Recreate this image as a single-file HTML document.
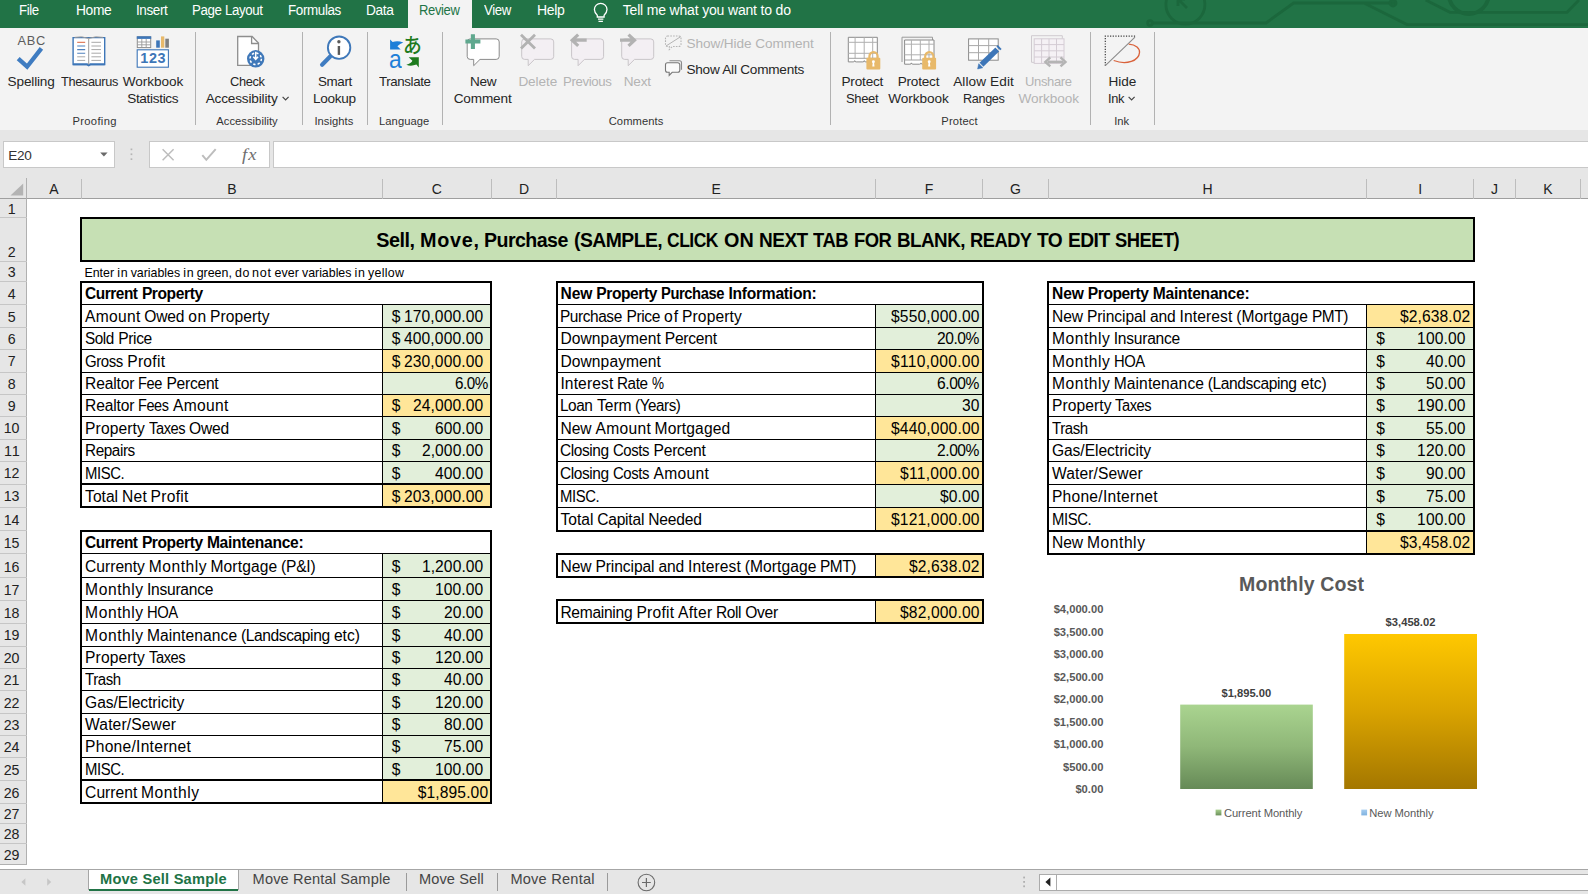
<!DOCTYPE html>
<html lang="en"><head><meta charset="utf-8"><title>Sell, Move, Purchase - Excel</title>
<style>
html,body{margin:0;padding:0;}
body{width:1588px;height:894px;overflow:hidden;position:relative;background:#fff;font-family:"Liberation Sans","Noto Sans CJK JP",sans-serif;color:#000;}
#bg div,#fg div{position:absolute;}
#tx span{position:absolute;white-space:pre;transform-origin:0 0;}
svg{position:absolute;overflow:visible;}
</style></head><body>
<div id="bg">
<div style="left:0.00px;top:0.00px;width:1588.00px;height:28.00px;background:#217346;"></div>
<div style="left:407.60px;top:0.00px;width:64.20px;height:28.50px;background:#f3f3f3;"></div>
<div style="left:0.00px;top:28.00px;width:1588.00px;height:101.50px;background:#f3f3f3;"></div>
<div style="left:0.00px;top:129.50px;width:1588.00px;height:69.00px;background:#e6e6e6;"></div>
<div style="left:2.50px;top:140.50px;width:112.50px;height:27.00px;background:#fff;border:1px solid #c8c8c8;box-sizing:border-box;"></div>
<div style="left:148.50px;top:140.50px;width:121.50px;height:27.00px;background:#fff;border:1px solid #c8c8c8;box-sizing:border-box;"></div>
<div style="left:273.00px;top:140.50px;width:1330.00px;height:27.00px;background:#fff;border:1px solid #c8c8c8;box-sizing:border-box;"></div>
<div style="left:0.00px;top:167.50px;width:1588.00px;height:31.00px;background:#e6e6e6;"></div>
<div style="left:0.00px;top:198.50px;width:26.50px;height:665.50px;background:#e6e6e6;"></div>
<div style="left:81.40px;top:217.70px;width:1392.10px;height:43.30px;background:#c6e0b4;"></div>
<div style="left:382.50px;top:304.60px;width:108.80px;height:22.60px;background:#e2efda;"></div>
<div style="left:382.50px;top:327.20px;width:108.80px;height:22.30px;background:#e2efda;"></div>
<div style="left:382.50px;top:349.50px;width:108.80px;height:22.50px;background:#ffe699;"></div>
<div style="left:382.50px;top:372.00px;width:108.80px;height:22.20px;background:#e2efda;"></div>
<div style="left:382.50px;top:394.20px;width:108.80px;height:22.30px;background:#ffe699;"></div>
<div style="left:382.50px;top:416.50px;width:108.80px;height:22.50px;background:#e2efda;"></div>
<div style="left:382.50px;top:439.00px;width:108.80px;height:22.50px;background:#e2efda;"></div>
<div style="left:382.50px;top:461.50px;width:108.80px;height:22.50px;background:#e2efda;"></div>
<div style="left:382.50px;top:484.00px;width:108.80px;height:23.00px;background:#ffe699;"></div>
<div style="left:382.50px;top:553.60px;width:108.80px;height:23.70px;background:#e2efda;"></div>
<div style="left:382.50px;top:577.30px;width:108.80px;height:23.00px;background:#e2efda;"></div>
<div style="left:382.50px;top:600.30px;width:108.80px;height:22.90px;background:#e2efda;"></div>
<div style="left:382.50px;top:623.20px;width:108.80px;height:22.80px;background:#e2efda;"></div>
<div style="left:382.50px;top:646.00px;width:108.80px;height:22.50px;background:#e2efda;"></div>
<div style="left:382.50px;top:668.50px;width:108.80px;height:22.30px;background:#e2efda;"></div>
<div style="left:382.50px;top:690.80px;width:108.80px;height:22.40px;background:#e2efda;"></div>
<div style="left:382.50px;top:713.20px;width:108.80px;height:22.20px;background:#e2efda;"></div>
<div style="left:382.50px;top:735.40px;width:108.80px;height:22.10px;background:#e2efda;"></div>
<div style="left:382.50px;top:757.50px;width:108.80px;height:22.70px;background:#e2efda;"></div>
<div style="left:382.50px;top:780.20px;width:108.80px;height:23.10px;background:#ffe699;"></div>
<div style="left:875.60px;top:304.60px;width:107.00px;height:22.60px;background:#e2efda;"></div>
<div style="left:875.60px;top:327.20px;width:107.00px;height:22.30px;background:#e2efda;"></div>
<div style="left:875.60px;top:349.50px;width:107.00px;height:22.50px;background:#ffe699;"></div>
<div style="left:875.60px;top:372.00px;width:107.00px;height:22.20px;background:#e2efda;"></div>
<div style="left:875.60px;top:394.20px;width:107.00px;height:22.30px;background:#e2efda;"></div>
<div style="left:875.60px;top:416.50px;width:107.00px;height:22.50px;background:#ffe699;"></div>
<div style="left:875.60px;top:439.00px;width:107.00px;height:22.50px;background:#e2efda;"></div>
<div style="left:875.60px;top:461.50px;width:107.00px;height:22.50px;background:#ffe699;"></div>
<div style="left:875.60px;top:484.00px;width:107.00px;height:23.00px;background:#e2efda;"></div>
<div style="left:875.60px;top:507.00px;width:107.00px;height:23.50px;background:#ffe699;"></div>
<div style="left:875.60px;top:553.60px;width:107.00px;height:23.70px;background:#ffe699;"></div>
<div style="left:875.60px;top:600.30px;width:107.00px;height:22.90px;background:#ffe699;"></div>
<div style="left:1366.90px;top:304.60px;width:106.60px;height:22.60px;background:#ffe699;"></div>
<div style="left:1366.90px;top:327.20px;width:106.60px;height:22.30px;background:#e2efda;"></div>
<div style="left:1366.90px;top:349.50px;width:106.60px;height:22.50px;background:#e2efda;"></div>
<div style="left:1366.90px;top:372.00px;width:106.60px;height:22.20px;background:#e2efda;"></div>
<div style="left:1366.90px;top:394.20px;width:106.60px;height:22.30px;background:#e2efda;"></div>
<div style="left:1366.90px;top:416.50px;width:106.60px;height:22.50px;background:#e2efda;"></div>
<div style="left:1366.90px;top:439.00px;width:106.60px;height:22.50px;background:#e2efda;"></div>
<div style="left:1366.90px;top:461.50px;width:106.60px;height:22.50px;background:#e2efda;"></div>
<div style="left:1366.90px;top:484.00px;width:106.60px;height:23.00px;background:#e2efda;"></div>
<div style="left:1366.90px;top:507.00px;width:106.60px;height:23.50px;background:#e2efda;"></div>
<div style="left:1366.90px;top:530.50px;width:106.60px;height:23.10px;background:#ffe699;"></div>
<div style="left:0.00px;top:869.00px;width:1588.00px;height:25.00px;background:#e6e6e6;"></div>
<div style="left:88.70px;top:869.50px;width:149.30px;height:20.00px;background:#fff;"></div>
<div style="left:1039.00px;top:873.50px;width:560.00px;height:17.50px;background:#fff;border:1px solid #ababab;box-sizing:border-box;"></div>
</div>
<svg width="1588" height="894" style="left:0;top:0" viewBox="0 0 1588 894" fill="none">
<!-- title bar circuit decoration -->
<g stroke="#1b673c" stroke-width="2.800" fill="none">
<circle cx="1185.400" cy="4.600" r="19.500"/><path d="M1178 -1 l9 9 M1178 -1 v7 M1178 -1 h7"/>
<path d="M1152 23 h114 l27.600 -20 h101.400 M1364 3 l43 21.600 h181"/>
<circle cx="1150" cy="23" r="2.300"/><circle cx="1393" cy="3" r="3"/>
<path d="M1425.700 0 l24.300 12.300 h117 l12 -12.300"/><circle cx="1468.800" cy="-6" r="20" stroke-width="4"/>
</g>
<!-- lightbulb -->
<g stroke="#fff" stroke-width="1.3" fill="none">
<path d="M597.3 15.2 c-2.4 -2.2 -2.9 -4 -2.9 -5.6 a6.3 6.3 0 0 1 12.6 0 c0 1.600 -0.500 3.400 -2.900 5.600 v1.800 h-6.800 z"/>
<path d="M598 19.200 h5.400 M598.500 21.300 h4.400"/>
</g>
<!-- Spelling -->
<path d="M18.200 58.600 L27.100 66.700 L41.400 48.400" stroke="#3f7cc1" stroke-width="4.300" stroke-linecap="butt" stroke-linejoin="miter"/>
<!-- Thesaurus (book) -->
<path d="M73.100 37.600 h31.600 v27 h-31.600 z" fill="#fff" stroke="#3d76b8" stroke-width="1.400"/>
<path d="M73.100 64.300 h14 l1.600 1 l1.600 -1 h14.400" stroke="#3d76b8" stroke-width="2"/>
<path d="M74.600 37.400 q7 -1.600 14.100 1 q7 -2.600 14.400 -1" stroke="#9a9a9a" stroke-width="1"/>
<path d="M88.700 38.600 v26" stroke="#9a9a9a" stroke-width="1"/>
<path d="M77.200 42.300 h8" stroke="#d9623b" stroke-width="1"/>
<path d="M77.200 46 h8 M77.200 49.600 h8 M77.200 53.200 h8" stroke="#4f81bd" stroke-width="1.100"/>
<path d="M77.200 56.800 h8 M77.200 60.400 h8 M91.400 42.300 h9.600 M91.400 46 h9.600 M91.400 49.600 h9.600 M91.400 53.200 h9.600 M91.400 56.800 h9.600 M91.400 60.400 h9.600" stroke="#a8a8a8" stroke-width="1"/>
<!-- Workbook statistics -->
<rect x="137.300" y="36.800" width="13.400" height="10.800" fill="#fff" stroke="#8c8c8c" stroke-width="1"/>
<rect x="136.800" y="36.300" width="14.400" height="2.600" fill="#3d76b8"/>
<path d="M137.300 42 h13.400 M137.300 44.800 h13.400 M141.800 39 v8.600 M146.200 39 v8.600" stroke="#9a9a9a" stroke-width="0.900"/>
<rect x="156.200" y="40.400" width="3.600" height="7.300" fill="#3d76b8"/><rect x="161" y="36.400" width="3.300" height="11.300" fill="#e8b96a"/><rect x="165.300" y="38.700" width="3.600" height="9" fill="#7f7f7f"/>
<rect x="137.200" y="49.800" width="31.200" height="17.400" fill="#fff" stroke="#3d76b8" stroke-width="1.100"/>
<!-- Check accessibility -->
<path d="M237.700 36.500 h14.400 l6.400 6.600 v22.200 h-20.800 z" fill="#fff" stroke="#8e8e8e" stroke-width="1.300"/>
<path d="M251.600 36.500 v7 h6.900" stroke="#8e8e8e" stroke-width="1.300"/>
<circle cx="255.700" cy="58.800" r="8.700" fill="#3f78b9"/>
<circle cx="255.700" cy="58.800" r="5.700" stroke="#fff" stroke-width="1.500" stroke-dasharray="2.300 2.150" fill="none"/>
<path d="M255.700 51.800 v7 M253.300 56.800 l2.400 2.600 l2.400 -2.600" stroke="#fff" stroke-width="1.500"/>
<!-- Smart lookup -->
<circle cx="339.100" cy="47.700" r="11.200" fill="#fff" stroke="#3f78b9" stroke-width="1.900"/>
<path d="M330.200 56.600 L322.100 64.700" stroke="#3f7cc1" stroke-width="4.200" stroke-linecap="round"/>
<path d="M338.900 46 v8.900" stroke="#5a5a5a" stroke-width="2.400"/><circle cx="338.900" cy="41.700" r="1.700" fill="#5a5a5a"/>
<!-- Translate arrows -->
<path d="M390.100 39.600 L390.100 49.500 L400.700 49.500 L397.400 46.200 Q400 43.600 403.300 42.500 Q397.500 40.300 392.600 42.100 Z" fill="#1e7fd8"/>
<path d="M408.700 57.300 L418.800 57.300 L418.800 67.600 L416.400 64.600 Q411 66.800 406.300 64.800 Q411.300 63.400 412.400 60.700 Z" fill="#1d7a1d"/>
<!-- New comment -->
<path d="M470.200 38.900 h26 a3 3 0 0 1 3 3 v14.500 a3 3 0 0 1 -3 3 h-16.200 l-6.300 6.300 v-6.300 h-3.500 a3 3 0 0 1 -3 -3 v-14.500 a3 3 0 0 1 3 -3 z" fill="#fff" stroke="#8a8a8a" stroke-width="1"/>
<path d="M465.400 41.500 h15 M472.900 34.200 v14.700" stroke="#5fa88e" stroke-width="4.100"/>
<!-- Delete -->
<g stroke="#c9c5c9" stroke-width="1" fill="#f3eff3">
<path d="M524.700 38.900 h26 a3 3 0 0 1 3 3 v14.500 a3 3 0 0 1 -3 3 h-16.200 l-6.300 6.300 v-6.300 h-3.500 a3 3 0 0 1 -3 -3 v-14.500 a3 3 0 0 1 3 -3 z"/>
<path d="M574.600 38.900 h26 a3 3 0 0 1 3 3 v14.500 a3 3 0 0 1 -3 3 h-16.200 l-6.300 6.300 v-6.300 h-3.500 a3 3 0 0 1 -3 -3 v-14.500 a3 3 0 0 1 3 -3 z"/>
<path d="M624.700 38.900 h26 a3 3 0 0 1 3 3 v14.500 a3 3 0 0 1 -3 3 h-16.200 l-6.300 6.300 v-6.300 h-3.500 a3 3 0 0 1 -3 -3 v-14.500 a3 3 0 0 1 3 -3 z"/>
</g>
<path d="M521 34.700 l14 13.800 M535 34.700 l-14 13.800" stroke="#b2b2b2" stroke-width="2.800"/>
<path d="M586.700 40.200 h-14 M578.200 34.600 l-6 5.600 l6 5.600" stroke="#b2b2b2" stroke-width="3.200" stroke-linejoin="miter"/>
<path d="M620 40.200 h14 M628.500 34.600 l6 5.600 l-6 5.600" stroke="#b2b2b2" stroke-width="3.200" stroke-linejoin="miter"/>
<!-- show/hide comment small -->
<path d="M667.500 36 h11.500 a2 2 0 0 1 2 2 v6.500 a2 2 0 0 1 -2 2 h-6.700 l-3 3 v-3 h-1.800 a2 2 0 0 1 -2 -2 v-6.500 a2 2 0 0 1 2 -2 z" stroke="#b4b4b4" stroke-width="1.100" stroke-dasharray="1.600 1.200"/>
<path d="M666 46 l14.800 -9.400" stroke="#b4b4b4" stroke-width="1"/>
<!-- show all comments small -->
<path d="M669.500 60.800 h10 a2 2 0 0 1 2 2 v7" stroke="#8a8a8a" stroke-width="1.100"/>
<path d="M667.500 62.700 h10.300 a2 2 0 0 1 2 2 v5.600 a2 2 0 0 1 -2 2 h-5.600 l-3 3 v-3 h-1.700 a2 2 0 0 1 -2 -2 v-5.600 a2 2 0 0 1 2 -2 z" stroke="#777" stroke-width="1.100" fill="#fafafa"/>
<!-- Protect sheet -->
<g stroke="#8a8a8a" stroke-width="1">
<path d="M848.300 37.300 h29 v24.600 h-11.500 q-1.500 0 -1.500 -1.300 q0 1.300 -1.500 1.300 h-6.600 q-1.500 0 -1.500 -1.300 q0 1.300 -1.500 1.300 h-4.900 z" fill="#fff"/>
<path d="M855.100 37.300 v21 M864.200 37.300 v21 M872.700 37.300 v21" stroke="#b0b0b0"/>
<path d="M848.300 42.300 h29 M848.300 53.300 h29" stroke="#b0b0b0"/><path d="M848.300 58.300 h29" stroke="#a0a0a0"/>
</g>
<g><rect x="866.400" y="57.700" width="13.900" height="11.700" rx="1" fill="#e8b96a"/>
<path d="M869.400 58 v-1.700 a4.100 4.100 0 0 1 8.200 0 v1.700" stroke="#e8b96a" stroke-width="2.200"/>
<circle cx="873.400" cy="61.800" r="1.450" fill="#fff"/><path d="M872.800 62 h1.200 l0.500 4.400 h-2.200 z" fill="#fff"/></g>
<!-- Protect workbook -->
<g stroke="#8a8a8a" stroke-width="1">
<path d="M902 62 v-24.800 h30.500 v3" fill="none" stroke="#9a9a9a"/>
<path d="M904.600 40 h29.400 v24.200 h-11.500 q-1.500 0 -1.500 -1.300 q0 1.300 -1.500 1.300 h-6.600 q-1.500 0 -1.500 -1.300 q0 1.300 -1.500 1.300 h-5.300 z" fill="#fff"/>
<path d="M911.400 40 v20 M920.300 40 v20 M929 40 v20" stroke="#b0b0b0"/>
<path d="M904.600 44.200 h29.400 M904.600 54.800 h29.400" stroke="#b0b0b0"/><path d="M904.600 60 h29.400" stroke="#a0a0a0"/>
</g>
<g transform="translate(55.800 0)"><rect x="866.400" y="57.700" width="13.900" height="11.700" rx="1" fill="#e8b96a"/>
<path d="M869.400 58 v-1.700 a4.100 4.100 0 0 1 8.200 0 v1.700" stroke="#e8b96a" stroke-width="2.200"/>
<circle cx="873.400" cy="61.800" r="1.450" fill="#fff"/><path d="M872.800 62 h1.200 l0.500 4.400 h-2.200 z" fill="#fff"/></g>
<!-- Allow edit ranges -->
<g stroke="#8a8a8a" stroke-width="1">
<rect x="968.600" y="38.900" width="29.600" height="21.300" fill="#fff"/>
<path d="M978.500 38.900 v21.300 M988.700 38.900 v21.300" stroke="#a8a8a8"/><path d="M968.600 45.600 h29.600 M968.600 52.700 h29.600" stroke="#a8a8a8"/>
</g>
<path d="M976 70 l9.500 -9.500 l17 -17 l-3 -3 l-22 22 z" fill="#f3f3f3" opacity="0"/>
<path d="M981.200 65 L997.300 49.400" stroke="#3d76b8" stroke-width="5.400"/>
<path d="M977.600 69 l1.100 -5.300 l4.100 4.100 z" fill="#3d76b8" stroke="#3d76b8" stroke-width="0.500"/>
<path d="M998.300 48.400 l1.400 -1.400" stroke="#3d76b8" stroke-width="5.400"/>
<path d="M995.600 47 l3.900 4" stroke="#f3f3f3" stroke-width="1"/>
<path d="M979.400 63 l3.900 4" stroke="#f3f3f3" stroke-width="0.900"/>
<!-- Unshare workbook -->
<g stroke="#d4ccd4" stroke-width="1">
<path d="M1034 62.300 h-2.500 v-26.600 h30.800 v3" fill="none" stroke="#cfcacf"/>
<rect x="1034.200" y="38.800" width="29.800" height="24.600" fill="#f5f1f5"/>
<path d="M1041.600 38.800 v24.600 M1049 38.800 v24.600 M1056.500 38.800 v24.600 M1034.200 44.600 h29.800 M1034.200 50.800 h29.800 M1034.200 57 h29.800"/>
</g>
<path d="M1047.500 61.900 h15.800" stroke="#b4b4b4" stroke-width="2.600"/>
<path d="M1050.300 57.400 l-5 4.500 l5 4.500 M1060.500 57.400 l5 4.500 l-5 4.500" stroke="#b4b4b4" stroke-width="2.400"/>
<!-- Hide ink -->
<path d="M1105.300 65.800 v-29.700 h29.800" stroke="#3c3c3c" stroke-width="1.200" stroke-dasharray="1.200 1.450"/>
<path d="M1105.300 65.600 L1135 37.200" stroke="#8a8a8a" stroke-width="1.100"/>
<path d="M1128.700 44.100 C1136 44.500 1140 48.500 1139.500 52.600 C1138.800 60.500 1127 65.600 1113.700 60.500" stroke="#d9623b" stroke-width="1.300"/>
<!-- chevrons -->
<path d="M282.600 96.800 l3 3 l3 -3" stroke="#444" stroke-width="1.200"/>
<path d="M1128.600 96.800 l3 3 l3 -3" stroke="#444" stroke-width="1.200"/>
<!-- formula bar glyphs -->
<path d="M100.200 152.600 h7.400 l-3.700 4 z" fill="#6a6a6a"/>
<g fill="#b5b5b5"><rect x="130.600" y="148.500" width="1.700" height="1.700"/><rect x="130.600" y="153.400" width="1.700" height="1.700"/><rect x="130.600" y="158.300" width="1.700" height="1.700"/></g>
<path d="M162.600 149.200 l11 11 M173.600 149.200 l-11 11" stroke="#bdbdbd" stroke-width="1.500"/>
<path d="M202.300 155.200 l4 4.600 l9.400 -10.600" stroke="#bdbdbd" stroke-width="2"/>
<!-- select all triangle -->
<path d="M23.200 183.600 v11.900 h-12.700 z" fill="#b3b3b3"/>
<!-- sheet nav arrows -->
<path d="M25.400 878.200 l-4 3.800 l4 3.800 z" fill="#c6c6c6"/><path d="M47.200 878.200 l4 3.800 l-4 3.800 z" fill="#c6c6c6"/>
<!-- new sheet button -->
<circle cx="646.400" cy="882.500" r="8.300" stroke="#6a6a6a" stroke-width="1.100"/><path d="M642 882.500 h8.800 M646.400 878.100 v8.800" stroke="#6a6a6a" stroke-width="1.200"/>
<!-- scroll bits -->
<g fill="#b0b0b0"><rect x="1023.200" y="876.600" width="1.800" height="1.800"/><rect x="1023.200" y="881" width="1.800" height="1.800"/><rect x="1023.200" y="885.400" width="1.800" height="1.800"/></g>
<path d="M1050.400 877.600 v8.800 l-5 -4.400 z" fill="#222"/>
</svg>

<svg width="1588" height="894" style="left:0;top:0" viewBox="0 0 1588 894">
<defs>
<linearGradient id="gG" x1="0" y1="0" x2="0" y2="1"><stop offset="0" stop-color="#aad490"/><stop offset="0.5" stop-color="#8fb778"/><stop offset="1" stop-color="#668a57"/></linearGradient>
<linearGradient id="gY" x1="0" y1="0" x2="0" y2="1"><stop offset="0" stop-color="#ffc800"/><stop offset="0.5" stop-color="#d9a300"/><stop offset="1" stop-color="#a47700"/></linearGradient>
<linearGradient id="gL1" x1="0" y1="0" x2="0" y2="1"><stop offset="0" stop-color="#a9d18e"/><stop offset="1" stop-color="#6b8f5b"/></linearGradient>
<linearGradient id="gL2" x1="0" y1="0" x2="0" y2="1"><stop offset="0" stop-color="#a6cdf0"/><stop offset="1" stop-color="#7fb2e0"/></linearGradient>
</defs>
<rect x="1180.2" y="704.6" width="132.6" height="84.4" fill="url(#gG)"/>
<rect x="1344.2" y="634" width="132.8" height="155" fill="url(#gY)"/>
<rect x="1215.6" y="809.6" width="5.8" height="5.8" fill="url(#gL1)"/>
<rect x="1361.3" y="809.6" width="5.8" height="5.8" fill="url(#gL2)"/>
</svg>

<div id="fg">
<div style="left:194.50px;top:32.00px;width:1.00px;height:92.50px;background:#b2b2b2;"></div>
<div style="left:301.50px;top:32.00px;width:1.00px;height:92.50px;background:#b2b2b2;"></div>
<div style="left:367.30px;top:32.00px;width:1.00px;height:92.50px;background:#b2b2b2;"></div>
<div style="left:442.40px;top:32.00px;width:1.00px;height:92.50px;background:#b2b2b2;"></div>
<div style="left:830.00px;top:32.00px;width:1.00px;height:92.50px;background:#b2b2b2;"></div>
<div style="left:1090.00px;top:32.00px;width:1.00px;height:92.50px;background:#b2b2b2;"></div>
<div style="left:1154.30px;top:32.00px;width:1.00px;height:92.50px;background:#b2b2b2;"></div>
<div style="left:0.00px;top:198.20px;width:1588.00px;height:1.00px;background:#9f9f9f;"></div>
<div style="left:26.00px;top:178.00px;width:1.00px;height:686.00px;background:#b0b0b0;"></div>
<div style="left:80.90px;top:178.50px;width:1.00px;height:20.00px;background:#bdbdbd;"></div>
<div style="left:382.00px;top:178.50px;width:1.00px;height:20.00px;background:#bdbdbd;"></div>
<div style="left:490.80px;top:178.50px;width:1.00px;height:20.00px;background:#bdbdbd;"></div>
<div style="left:556.20px;top:178.50px;width:1.00px;height:20.00px;background:#bdbdbd;"></div>
<div style="left:875.10px;top:178.50px;width:1.00px;height:20.00px;background:#bdbdbd;"></div>
<div style="left:982.10px;top:178.50px;width:1.00px;height:20.00px;background:#bdbdbd;"></div>
<div style="left:1047.70px;top:178.50px;width:1.00px;height:20.00px;background:#bdbdbd;"></div>
<div style="left:1366.40px;top:178.50px;width:1.00px;height:20.00px;background:#bdbdbd;"></div>
<div style="left:1473.00px;top:178.50px;width:1.00px;height:20.00px;background:#bdbdbd;"></div>
<div style="left:1514.90px;top:178.50px;width:1.00px;height:20.00px;background:#bdbdbd;"></div>
<div style="left:1579.90px;top:178.50px;width:1.00px;height:20.00px;background:#bdbdbd;"></div>
<div style="left:0.00px;top:217.20px;width:26.50px;height:1.00px;background:#c6c6c6;"></div>
<div style="left:0.00px;top:260.50px;width:26.50px;height:1.00px;background:#c6c6c6;"></div>
<div style="left:0.00px;top:281.00px;width:26.50px;height:1.00px;background:#c6c6c6;"></div>
<div style="left:0.00px;top:304.10px;width:26.50px;height:1.00px;background:#c6c6c6;"></div>
<div style="left:0.00px;top:326.70px;width:26.50px;height:1.00px;background:#c6c6c6;"></div>
<div style="left:0.00px;top:349.00px;width:26.50px;height:1.00px;background:#c6c6c6;"></div>
<div style="left:0.00px;top:371.50px;width:26.50px;height:1.00px;background:#c6c6c6;"></div>
<div style="left:0.00px;top:393.70px;width:26.50px;height:1.00px;background:#c6c6c6;"></div>
<div style="left:0.00px;top:416.00px;width:26.50px;height:1.00px;background:#c6c6c6;"></div>
<div style="left:0.00px;top:438.50px;width:26.50px;height:1.00px;background:#c6c6c6;"></div>
<div style="left:0.00px;top:461.00px;width:26.50px;height:1.00px;background:#c6c6c6;"></div>
<div style="left:0.00px;top:483.50px;width:26.50px;height:1.00px;background:#c6c6c6;"></div>
<div style="left:0.00px;top:506.50px;width:26.50px;height:1.00px;background:#c6c6c6;"></div>
<div style="left:0.00px;top:530.00px;width:26.50px;height:1.00px;background:#c6c6c6;"></div>
<div style="left:0.00px;top:553.10px;width:26.50px;height:1.00px;background:#c6c6c6;"></div>
<div style="left:0.00px;top:576.80px;width:26.50px;height:1.00px;background:#c6c6c6;"></div>
<div style="left:0.00px;top:599.80px;width:26.50px;height:1.00px;background:#c6c6c6;"></div>
<div style="left:0.00px;top:622.70px;width:26.50px;height:1.00px;background:#c6c6c6;"></div>
<div style="left:0.00px;top:645.50px;width:26.50px;height:1.00px;background:#c6c6c6;"></div>
<div style="left:0.00px;top:668.00px;width:26.50px;height:1.00px;background:#c6c6c6;"></div>
<div style="left:0.00px;top:690.30px;width:26.50px;height:1.00px;background:#c6c6c6;"></div>
<div style="left:0.00px;top:712.70px;width:26.50px;height:1.00px;background:#c6c6c6;"></div>
<div style="left:0.00px;top:734.90px;width:26.50px;height:1.00px;background:#c6c6c6;"></div>
<div style="left:0.00px;top:757.00px;width:26.50px;height:1.00px;background:#c6c6c6;"></div>
<div style="left:0.00px;top:779.70px;width:26.50px;height:1.00px;background:#c6c6c6;"></div>
<div style="left:0.00px;top:802.80px;width:26.50px;height:1.00px;background:#c6c6c6;"></div>
<div style="left:0.00px;top:823.20px;width:26.50px;height:1.00px;background:#c6c6c6;"></div>
<div style="left:0.00px;top:842.70px;width:26.50px;height:1.00px;background:#c6c6c6;"></div>
<div style="left:0.00px;top:863.50px;width:26.50px;height:1.00px;background:#c6c6c6;"></div>
<div style="left:0.00px;top:863.80px;width:27.00px;height:1.00px;background:#b0b0b0;"></div>
<div style="left:80.40px;top:216.80px;width:1394.10px;height:2.00px;background:#000;"></div>
<div style="left:80.40px;top:259.80px;width:1394.10px;height:2.00px;background:#000;"></div>
<div style="left:80.40px;top:217.00px;width:2.00px;height:45.00px;background:#000;"></div>
<div style="left:1472.50px;top:217.00px;width:2.00px;height:45.00px;background:#000;"></div>
<div style="left:81.40px;top:303.90px;width:409.90px;height:1.40px;background:#000;"></div>
<div style="left:81.40px;top:326.70px;width:409.90px;height:1.00px;background:#000;"></div>
<div style="left:81.40px;top:349.00px;width:409.90px;height:1.00px;background:#000;"></div>
<div style="left:81.40px;top:371.50px;width:409.90px;height:1.00px;background:#000;"></div>
<div style="left:81.40px;top:393.70px;width:409.90px;height:1.00px;background:#000;"></div>
<div style="left:81.40px;top:416.00px;width:409.90px;height:1.00px;background:#000;"></div>
<div style="left:81.40px;top:438.50px;width:409.90px;height:1.00px;background:#000;"></div>
<div style="left:81.40px;top:461.00px;width:409.90px;height:1.00px;background:#000;"></div>
<div style="left:81.40px;top:483.00px;width:409.90px;height:2.00px;background:#000;"></div>
<div style="left:382.00px;top:304.60px;width:1.00px;height:202.40px;background:#000;"></div>
<div style="left:80.40px;top:280.50px;width:411.90px;height:2.00px;background:#000;"></div>
<div style="left:80.40px;top:506.00px;width:411.90px;height:2.00px;background:#000;"></div>
<div style="left:80.40px;top:280.50px;width:2.00px;height:227.50px;background:#000;"></div>
<div style="left:490.30px;top:280.50px;width:2.00px;height:227.50px;background:#000;"></div>
<div style="left:81.40px;top:552.90px;width:409.90px;height:1.40px;background:#000;"></div>
<div style="left:81.40px;top:576.80px;width:409.90px;height:1.00px;background:#000;"></div>
<div style="left:81.40px;top:599.80px;width:409.90px;height:1.00px;background:#000;"></div>
<div style="left:81.40px;top:622.70px;width:409.90px;height:1.00px;background:#000;"></div>
<div style="left:81.40px;top:645.50px;width:409.90px;height:1.00px;background:#000;"></div>
<div style="left:81.40px;top:668.00px;width:409.90px;height:1.00px;background:#000;"></div>
<div style="left:81.40px;top:690.30px;width:409.90px;height:1.00px;background:#000;"></div>
<div style="left:81.40px;top:712.70px;width:409.90px;height:1.00px;background:#000;"></div>
<div style="left:81.40px;top:734.90px;width:409.90px;height:1.00px;background:#000;"></div>
<div style="left:81.40px;top:757.00px;width:409.90px;height:1.00px;background:#000;"></div>
<div style="left:81.40px;top:779.20px;width:409.90px;height:2.00px;background:#000;"></div>
<div style="left:382.00px;top:553.60px;width:1.00px;height:249.70px;background:#000;"></div>
<div style="left:80.40px;top:529.50px;width:411.90px;height:2.00px;background:#000;"></div>
<div style="left:80.40px;top:802.30px;width:411.90px;height:2.00px;background:#000;"></div>
<div style="left:80.40px;top:529.50px;width:2.00px;height:274.80px;background:#000;"></div>
<div style="left:490.30px;top:529.50px;width:2.00px;height:274.80px;background:#000;"></div>
<div style="left:556.70px;top:303.90px;width:425.90px;height:1.40px;background:#000;"></div>
<div style="left:556.70px;top:326.70px;width:425.90px;height:1.00px;background:#000;"></div>
<div style="left:556.70px;top:349.00px;width:425.90px;height:1.00px;background:#000;"></div>
<div style="left:556.70px;top:371.50px;width:425.90px;height:1.00px;background:#000;"></div>
<div style="left:556.70px;top:393.70px;width:425.90px;height:1.00px;background:#000;"></div>
<div style="left:556.70px;top:416.00px;width:425.90px;height:1.00px;background:#000;"></div>
<div style="left:556.70px;top:438.50px;width:425.90px;height:1.00px;background:#000;"></div>
<div style="left:556.70px;top:461.00px;width:425.90px;height:1.00px;background:#000;"></div>
<div style="left:556.70px;top:483.50px;width:425.90px;height:1.00px;background:#000;"></div>
<div style="left:556.70px;top:506.50px;width:425.90px;height:1.00px;background:#000;"></div>
<div style="left:875.10px;top:304.60px;width:1.00px;height:225.90px;background:#000;"></div>
<div style="left:555.70px;top:280.50px;width:427.90px;height:2.00px;background:#000;"></div>
<div style="left:555.70px;top:529.50px;width:427.90px;height:2.00px;background:#000;"></div>
<div style="left:555.70px;top:280.50px;width:2.00px;height:251.00px;background:#000;"></div>
<div style="left:981.60px;top:280.50px;width:2.00px;height:251.00px;background:#000;"></div>
<div style="left:875.10px;top:553.60px;width:1.00px;height:23.70px;background:#000;"></div>
<div style="left:555.70px;top:552.60px;width:427.90px;height:2.00px;background:#000;"></div>
<div style="left:555.70px;top:576.30px;width:427.90px;height:2.00px;background:#000;"></div>
<div style="left:555.70px;top:552.60px;width:2.00px;height:25.70px;background:#000;"></div>
<div style="left:981.60px;top:552.60px;width:2.00px;height:25.70px;background:#000;"></div>
<div style="left:875.10px;top:600.30px;width:1.00px;height:22.90px;background:#000;"></div>
<div style="left:555.70px;top:599.30px;width:427.90px;height:2.00px;background:#000;"></div>
<div style="left:555.70px;top:622.20px;width:427.90px;height:2.00px;background:#000;"></div>
<div style="left:555.70px;top:599.30px;width:2.00px;height:24.90px;background:#000;"></div>
<div style="left:981.60px;top:599.30px;width:2.00px;height:24.90px;background:#000;"></div>
<div style="left:1048.20px;top:303.90px;width:425.30px;height:1.40px;background:#000;"></div>
<div style="left:1048.20px;top:326.70px;width:425.30px;height:1.00px;background:#000;"></div>
<div style="left:1048.20px;top:349.00px;width:425.30px;height:1.00px;background:#000;"></div>
<div style="left:1048.20px;top:371.50px;width:425.30px;height:1.00px;background:#000;"></div>
<div style="left:1048.20px;top:393.70px;width:425.30px;height:1.00px;background:#000;"></div>
<div style="left:1048.20px;top:416.00px;width:425.30px;height:1.00px;background:#000;"></div>
<div style="left:1048.20px;top:438.50px;width:425.30px;height:1.00px;background:#000;"></div>
<div style="left:1048.20px;top:461.00px;width:425.30px;height:1.00px;background:#000;"></div>
<div style="left:1048.20px;top:483.50px;width:425.30px;height:1.00px;background:#000;"></div>
<div style="left:1048.20px;top:506.50px;width:425.30px;height:1.00px;background:#000;"></div>
<div style="left:1048.20px;top:529.50px;width:425.30px;height:2.00px;background:#000;"></div>
<div style="left:1366.40px;top:304.60px;width:1.00px;height:249.00px;background:#000;"></div>
<div style="left:1047.20px;top:280.50px;width:427.30px;height:2.00px;background:#000;"></div>
<div style="left:1047.20px;top:552.60px;width:427.30px;height:2.00px;background:#000;"></div>
<div style="left:1047.20px;top:280.50px;width:2.00px;height:274.10px;background:#000;"></div>
<div style="left:1472.50px;top:280.50px;width:2.00px;height:274.10px;background:#000;"></div>
<div style="left:0.00px;top:868.50px;width:1588.00px;height:1.00px;background:#a6a6a6;"></div>
<div style="left:88.20px;top:869.00px;width:1.00px;height:21.00px;background:#a6a6a6;"></div>
<div style="left:237.50px;top:869.00px;width:1.00px;height:21.00px;background:#a6a6a6;"></div>
<div style="left:88.70px;top:888.80px;width:149.30px;height:2.40px;background:#217346;"></div>
<div style="left:406.40px;top:873.00px;width:1.00px;height:18.00px;background:#9a9a9a;"></div>
<div style="left:497.30px;top:873.00px;width:1.00px;height:18.00px;background:#9a9a9a;"></div>
<div style="left:607.40px;top:873.00px;width:1.00px;height:18.00px;background:#9a9a9a;"></div>
<div style="left:1055.50px;top:874.00px;width:1.00px;height:16.00px;background:#ababab;"></div>
</div>
<div id="tx">
<span style="left:18.60px;top:0.95px;font-size:14.0px;line-height:18px;color:#fff;letter-spacing:-0.392px;transform:scaleX(0.9447);">File</span>
<span style="left:75.60px;top:0.95px;font-size:14.0px;line-height:18px;color:#fff;letter-spacing:-0.392px;transform:scaleX(0.9870);">Home</span>
<span style="left:136.00px;top:0.95px;font-size:14.0px;line-height:18px;color:#fff;letter-spacing:-0.392px;transform:scaleX(0.9621);">Insert</span>
<span style="left:192.00px;top:0.95px;font-size:14.0px;line-height:18px;color:#fff;letter-spacing:-0.392px;transform:scaleX(0.9505);">Page Layout</span>
<span style="left:287.70px;top:0.95px;font-size:14.0px;line-height:18px;color:#fff;letter-spacing:-0.392px;transform:scaleX(0.9586);">Formulas</span>
<span style="left:365.70px;top:0.95px;font-size:14.0px;line-height:18px;color:#fff;letter-spacing:-0.392px;transform:scaleX(0.9790);">Data</span>
<span style="left:418.60px;top:0.95px;font-size:14.0px;line-height:18px;color:#217346;letter-spacing:-0.392px;transform:scaleX(0.9285);">Review</span>
<span style="left:484.00px;top:0.95px;font-size:14.0px;line-height:18px;color:#fff;letter-spacing:-0.392px;transform:scaleX(0.9441);">View</span>
<span style="left:537.00px;top:0.95px;font-size:14.0px;line-height:18px;color:#fff;letter-spacing:-0.364px;">Help</span>
<span style="left:622.70px;top:0.95px;font-size:14.0px;line-height:18px;color:#fff;letter-spacing:-0.171px;">Tell me what you want to do</span>
<span style="left:7.60px;top:72.79px;font-size:13.6px;line-height:18px;color:#262626;letter-spacing:-0.167px;">Spelling</span>
<span style="left:60.50px;top:72.79px;font-size:13.6px;line-height:18px;color:#262626;letter-spacing:-0.381px;transform:scaleX(0.9366);">Thesaurus</span>
<span style="left:122.80px;top:72.79px;font-size:13.6px;line-height:18px;color:#262626;letter-spacing:-0.078px;">Workbook</span>
<span style="left:127.20px;top:90.29px;font-size:13.6px;line-height:18px;color:#262626;letter-spacing:-0.332px;">Statistics</span>
<span style="left:230.40px;top:72.79px;font-size:13.6px;line-height:18px;color:#262626;letter-spacing:-0.381px;transform:scaleX(0.9457);">Check</span>
<span style="left:205.70px;top:90.29px;font-size:13.6px;line-height:18px;color:#262626;letter-spacing:-0.169px;">Accessibility</span>
<span style="left:317.50px;top:72.79px;font-size:13.6px;line-height:18px;color:#262626;letter-spacing:-0.381px;transform:scaleX(0.9847);">Smart</span>
<span style="left:313.10px;top:90.29px;font-size:13.6px;line-height:18px;color:#262626;letter-spacing:-0.340px;">Lookup</span>
<span style="left:379.30px;top:72.79px;font-size:13.6px;line-height:18px;color:#262626;letter-spacing:-0.381px;transform:scaleX(0.9771);">Translate</span>
<span style="left:469.90px;top:72.79px;font-size:13.6px;line-height:18px;color:#262626;letter-spacing:-0.297px;">New</span>
<span style="left:453.70px;top:90.29px;font-size:13.6px;line-height:18px;color:#262626;letter-spacing:-0.154px;">Comment</span>
<span style="left:518.40px;top:72.79px;font-size:13.6px;line-height:18px;color:#b4b4b4;letter-spacing:-0.099px;">Delete</span>
<span style="left:563.10px;top:72.79px;font-size:13.6px;line-height:18px;color:#b4b4b4;letter-spacing:-0.381px;transform:scaleX(0.9717);">Previous</span>
<span style="left:623.80px;top:72.79px;font-size:13.6px;line-height:18px;color:#b4b4b4;letter-spacing:-0.250px;">Next</span>
<span style="left:686.40px;top:35.19px;font-size:13.6px;line-height:18px;color:#b4b4b4;letter-spacing:-0.065px;">Show/Hide Comment</span>
<span style="left:686.40px;top:61.29px;font-size:13.6px;line-height:18px;color:#262626;letter-spacing:-0.230px;">Show All Comments</span>
<span style="left:841.50px;top:72.79px;font-size:13.6px;line-height:18px;color:#262626;letter-spacing:-0.194px;">Protect</span>
<span style="left:846.00px;top:90.29px;font-size:13.6px;line-height:18px;color:#262626;letter-spacing:-0.381px;transform:scaleX(0.9559);">Sheet</span>
<span style="left:897.70px;top:72.79px;font-size:13.6px;line-height:18px;color:#262626;letter-spacing:-0.211px;">Protect</span>
<span style="left:888.20px;top:90.29px;font-size:13.6px;line-height:18px;color:#262626;letter-spacing:-0.049px;">Workbook</span>
<span style="left:953.20px;top:72.79px;font-size:13.6px;line-height:18px;color:#262626;letter-spacing:0.102px;">Allow Edit</span>
<span style="left:962.70px;top:90.29px;font-size:13.6px;line-height:18px;color:#262626;letter-spacing:-0.381px;transform:scaleX(0.9299);">Ranges</span>
<span style="left:1025.00px;top:72.79px;font-size:13.6px;line-height:18px;color:#b4b4b4;letter-spacing:-0.381px;transform:scaleX(0.9573);">Unshare</span>
<span style="left:1018.40px;top:90.29px;font-size:13.6px;line-height:18px;color:#b4b4b4;letter-spacing:-0.049px;">Workbook</span>
<span style="left:1108.50px;top:72.79px;font-size:13.6px;line-height:18px;color:#262626;letter-spacing:-0.086px;">Hide</span>
<span style="left:1107.60px;top:90.29px;font-size:13.6px;line-height:18px;color:#262626;letter-spacing:-0.381px;transform:scaleX(0.9440);">Ink</span>
<span style="left:72.40px;top:113.92px;font-size:11.2px;line-height:15px;color:#333;letter-spacing:0.347px;">Proofing</span>
<span style="left:216.30px;top:113.92px;font-size:11.2px;line-height:15px;color:#333;letter-spacing:0.040px;">Accessibility</span>
<span style="left:314.40px;top:113.92px;font-size:11.2px;line-height:15px;color:#333;letter-spacing:0.049px;">Insights</span>
<span style="left:379.00px;top:113.92px;font-size:11.2px;line-height:15px;color:#333;letter-spacing:0.075px;">Language</span>
<span style="left:608.70px;top:113.92px;font-size:11.2px;line-height:15px;color:#333;letter-spacing:0.088px;">Comments</span>
<span style="left:941.30px;top:113.92px;font-size:11.2px;line-height:15px;color:#333;letter-spacing:0.143px;">Protect</span>
<span style="left:1114.20px;top:113.92px;font-size:11.2px;line-height:15px;color:#333;letter-spacing:-0.062px;">Ink</span>
<span style="left:8.20px;top:146.59px;font-size:13.6px;line-height:18px;color:#333;letter-spacing:-0.294px;">E20</span>
<span style="left:49.28px;top:180.45px;font-size:14.0px;line-height:18px;color:#222;">A</span>
<span style="left:227.28px;top:180.45px;font-size:14.0px;line-height:18px;color:#222;">B</span>
<span style="left:431.84px;top:180.45px;font-size:14.0px;line-height:18px;color:#222;">C</span>
<span style="left:518.94px;top:180.45px;font-size:14.0px;line-height:18px;color:#222;">D</span>
<span style="left:711.48px;top:180.45px;font-size:14.0px;line-height:18px;color:#222;">E</span>
<span style="left:924.82px;top:180.45px;font-size:14.0px;line-height:18px;color:#222;">F</span>
<span style="left:1009.96px;top:180.45px;font-size:14.0px;line-height:18px;color:#222;">G</span>
<span style="left:1202.49px;top:180.45px;font-size:14.0px;line-height:18px;color:#222;">H</span>
<span style="left:1418.26px;top:180.45px;font-size:14.0px;line-height:18px;color:#222;">I</span>
<span style="left:1490.95px;top:180.45px;font-size:14.0px;line-height:18px;color:#222;">J</span>
<span style="left:1543.23px;top:180.45px;font-size:14.0px;line-height:18px;color:#222;">K</span>
<span style="left:7.65px;top:199.78px;font-size:14.2px;line-height:18px;color:#222;">1</span>
<span style="left:7.65px;top:242.78px;font-size:14.2px;line-height:18px;color:#222;">2</span>
<span style="left:7.65px;top:263.08px;font-size:14.2px;line-height:18px;color:#222;">3</span>
<span style="left:7.65px;top:285.08px;font-size:14.2px;line-height:18px;color:#222;">4</span>
<span style="left:7.65px;top:307.68px;font-size:14.2px;line-height:18px;color:#222;">5</span>
<span style="left:7.65px;top:329.98px;font-size:14.2px;line-height:18px;color:#222;">6</span>
<span style="left:7.65px;top:352.48px;font-size:14.2px;line-height:18px;color:#222;">7</span>
<span style="left:7.65px;top:374.68px;font-size:14.2px;line-height:18px;color:#222;">8</span>
<span style="left:7.65px;top:396.98px;font-size:14.2px;line-height:18px;color:#222;">9</span>
<span style="left:3.70px;top:419.48px;font-size:14.2px;line-height:18px;color:#222;letter-spacing:0.026px;">10</span>
<span style="left:3.70px;top:441.98px;font-size:14.2px;line-height:18px;color:#222;letter-spacing:0.852px;transform:scaleX(1.0146);">11</span>
<span style="left:3.70px;top:464.48px;font-size:14.2px;line-height:18px;color:#222;letter-spacing:0.026px;">12</span>
<span style="left:3.70px;top:487.48px;font-size:14.2px;line-height:18px;color:#222;letter-spacing:0.026px;">13</span>
<span style="left:3.70px;top:510.98px;font-size:14.2px;line-height:18px;color:#222;letter-spacing:0.026px;">14</span>
<span style="left:3.70px;top:534.08px;font-size:14.2px;line-height:18px;color:#222;letter-spacing:0.026px;">15</span>
<span style="left:3.70px;top:557.78px;font-size:14.2px;line-height:18px;color:#222;letter-spacing:0.026px;">16</span>
<span style="left:3.70px;top:580.78px;font-size:14.2px;line-height:18px;color:#222;letter-spacing:0.026px;">17</span>
<span style="left:3.70px;top:603.68px;font-size:14.2px;line-height:18px;color:#222;letter-spacing:0.026px;">18</span>
<span style="left:3.70px;top:626.48px;font-size:14.2px;line-height:18px;color:#222;letter-spacing:0.026px;">19</span>
<span style="left:3.70px;top:648.98px;font-size:14.2px;line-height:18px;color:#222;letter-spacing:0.026px;">20</span>
<span style="left:3.70px;top:671.28px;font-size:14.2px;line-height:18px;color:#222;letter-spacing:0.026px;">21</span>
<span style="left:3.70px;top:693.68px;font-size:14.2px;line-height:18px;color:#222;letter-spacing:0.026px;">22</span>
<span style="left:3.70px;top:715.88px;font-size:14.2px;line-height:18px;color:#222;letter-spacing:0.026px;">23</span>
<span style="left:3.70px;top:737.98px;font-size:14.2px;line-height:18px;color:#222;letter-spacing:0.026px;">24</span>
<span style="left:3.70px;top:760.68px;font-size:14.2px;line-height:18px;color:#222;letter-spacing:0.026px;">25</span>
<span style="left:3.70px;top:783.78px;font-size:14.2px;line-height:18px;color:#222;letter-spacing:0.026px;">26</span>
<span style="left:3.70px;top:805.28px;font-size:14.2px;line-height:18px;color:#222;letter-spacing:0.026px;">27</span>
<span style="left:3.70px;top:825.28px;font-size:14.2px;line-height:18px;color:#222;letter-spacing:0.026px;">28</span>
<span style="left:3.70px;top:845.58px;font-size:14.2px;line-height:18px;color:#222;letter-spacing:0.026px;">29</span>
<span style="left:391.80px;top:306.89px;font-size:15.6px;line-height:20px;">$</span>
<span style="left:403.90px;top:306.89px;font-size:15.6px;line-height:20px;letter-spacing:0.151px;">170,000.00</span>
<span style="left:391.80px;top:329.19px;font-size:15.6px;line-height:20px;">$</span>
<span style="left:403.90px;top:329.19px;font-size:15.6px;line-height:20px;letter-spacing:0.151px;">400,000.00</span>
<span style="left:391.80px;top:351.69px;font-size:15.6px;line-height:20px;">$</span>
<span style="left:403.90px;top:351.69px;font-size:15.6px;line-height:20px;letter-spacing:0.151px;">230,000.00</span>
<span style="left:454.70px;top:373.89px;font-size:15.6px;line-height:20px;letter-spacing:-0.437px;transform:scaleX(0.9757);">6.0%</span>
<span style="left:391.80px;top:396.19px;font-size:15.6px;line-height:20px;">$</span>
<span style="left:412.90px;top:396.19px;font-size:15.6px;line-height:20px;letter-spacing:0.128px;">24,000.00</span>
<span style="left:391.80px;top:418.69px;font-size:15.6px;line-height:20px;">$</span>
<span style="left:434.90px;top:418.69px;font-size:15.6px;line-height:20px;letter-spacing:0.141px;">600.00</span>
<span style="left:85.10px;top:441.19px;font-size:15.6px;line-height:20px;letter-spacing:-0.437px;transform:scaleX(0.9828);">Repairs</span>
<span style="left:391.80px;top:441.19px;font-size:15.6px;line-height:20px;">$</span>
<span style="left:421.90px;top:441.19px;font-size:15.6px;line-height:20px;letter-spacing:0.100px;">2,000.00</span>
<span style="left:85.10px;top:463.69px;font-size:15.6px;line-height:20px;letter-spacing:-0.437px;transform:scaleX(0.9539);">MISC.</span>
<span style="left:391.80px;top:463.69px;font-size:15.6px;line-height:20px;">$</span>
<span style="left:434.90px;top:463.69px;font-size:15.6px;line-height:20px;letter-spacing:0.141px;">400.00</span>
<span style="left:391.80px;top:486.69px;font-size:15.6px;line-height:20px;">$</span>
<span style="left:403.90px;top:486.69px;font-size:15.6px;line-height:20px;letter-spacing:0.151px;">203,000.00</span>
<span style="left:391.80px;top:556.99px;font-size:15.6px;line-height:20px;">$</span>
<span style="left:421.90px;top:556.99px;font-size:15.6px;line-height:20px;letter-spacing:0.100px;">1,200.00</span>
<span style="left:391.80px;top:579.99px;font-size:15.6px;line-height:20px;">$</span>
<span style="left:434.90px;top:579.99px;font-size:15.6px;line-height:20px;letter-spacing:0.141px;">100.00</span>
<span style="left:391.80px;top:602.89px;font-size:15.6px;line-height:20px;">$</span>
<span style="left:443.90px;top:602.89px;font-size:15.6px;line-height:20px;letter-spacing:0.094px;">20.00</span>
<span style="left:391.80px;top:625.69px;font-size:15.6px;line-height:20px;">$</span>
<span style="left:443.90px;top:625.69px;font-size:15.6px;line-height:20px;letter-spacing:0.094px;">40.00</span>
<span style="left:391.80px;top:648.19px;font-size:15.6px;line-height:20px;">$</span>
<span style="left:434.90px;top:648.19px;font-size:15.6px;line-height:20px;letter-spacing:0.141px;">120.00</span>
<span style="left:85.10px;top:670.49px;font-size:15.6px;line-height:20px;letter-spacing:-0.437px;transform:scaleX(0.9652);">Trash</span>
<span style="left:391.80px;top:670.49px;font-size:15.6px;line-height:20px;">$</span>
<span style="left:443.90px;top:670.49px;font-size:15.6px;line-height:20px;letter-spacing:0.094px;">40.00</span>
<span style="left:85.10px;top:692.89px;font-size:15.6px;line-height:20px;letter-spacing:-0.039px;">Gas/Electricity</span>
<span style="left:391.80px;top:692.89px;font-size:15.6px;line-height:20px;">$</span>
<span style="left:434.90px;top:692.89px;font-size:15.6px;line-height:20px;letter-spacing:0.141px;">120.00</span>
<span style="left:85.10px;top:715.09px;font-size:15.6px;line-height:20px;letter-spacing:0.126px;">Water/Sewer</span>
<span style="left:391.80px;top:715.09px;font-size:15.6px;line-height:20px;">$</span>
<span style="left:443.90px;top:715.09px;font-size:15.6px;line-height:20px;letter-spacing:0.094px;">80.00</span>
<span style="left:85.10px;top:737.19px;font-size:15.6px;line-height:20px;letter-spacing:0.261px;">Phone/Internet</span>
<span style="left:391.80px;top:737.19px;font-size:15.6px;line-height:20px;">$</span>
<span style="left:443.90px;top:737.19px;font-size:15.6px;line-height:20px;letter-spacing:0.094px;">75.00</span>
<span style="left:85.10px;top:759.89px;font-size:15.6px;line-height:20px;letter-spacing:-0.437px;transform:scaleX(0.9539);">MISC.</span>
<span style="left:391.80px;top:759.89px;font-size:15.6px;line-height:20px;">$</span>
<span style="left:434.90px;top:759.89px;font-size:15.6px;line-height:20px;letter-spacing:0.141px;">100.00</span>
<span style="left:417.70px;top:782.99px;font-size:15.6px;line-height:20px;letter-spacing:0.128px;">$1,895.00</span>
<span style="left:891.00px;top:306.89px;font-size:15.6px;line-height:20px;letter-spacing:0.168px;">$550,000.00</span>
<span style="left:937.00px;top:329.19px;font-size:15.6px;line-height:20px;letter-spacing:-0.437px;">20.0%</span>
<span style="left:560.40px;top:351.69px;font-size:15.6px;line-height:20px;letter-spacing:0.089px;">Downpayment</span>
<span style="left:891.00px;top:351.69px;font-size:15.6px;line-height:20px;letter-spacing:0.284px;">$110,000.00</span>
<span style="left:937.00px;top:373.89px;font-size:15.6px;line-height:20px;letter-spacing:-0.437px;">6.00%</span>
<span style="left:962.00px;top:396.19px;font-size:15.6px;line-height:20px;letter-spacing:0.055px;">30</span>
<span style="left:891.00px;top:418.69px;font-size:15.6px;line-height:20px;letter-spacing:0.168px;">$440,000.00</span>
<span style="left:937.00px;top:441.19px;font-size:15.6px;line-height:20px;letter-spacing:-0.437px;">2.00%</span>
<span style="left:900.00px;top:463.69px;font-size:15.6px;line-height:20px;letter-spacing:0.279px;">$11,000.00</span>
<span style="left:560.40px;top:486.69px;font-size:15.6px;line-height:20px;letter-spacing:-0.437px;transform:scaleX(0.9539);">MISC.</span>
<span style="left:940.00px;top:486.69px;font-size:15.6px;line-height:20px;letter-spacing:0.094px;">$0.00</span>
<span style="left:891.00px;top:510.19px;font-size:15.6px;line-height:20px;letter-spacing:0.168px;">$121,000.00</span>
<span style="left:909.00px;top:556.99px;font-size:15.6px;line-height:20px;letter-spacing:0.128px;">$2,638.02</span>
<span style="left:900.00px;top:602.89px;font-size:15.6px;line-height:20px;letter-spacing:0.151px;">$82,000.00</span>
<span style="left:1399.90px;top:306.89px;font-size:15.6px;line-height:20px;letter-spacing:0.128px;">$2,638.02</span>
<span style="left:1376.20px;top:329.19px;font-size:15.6px;line-height:20px;">$</span>
<span style="left:1417.10px;top:329.19px;font-size:15.6px;line-height:20px;letter-spacing:0.141px;">100.00</span>
<span style="left:1376.20px;top:351.69px;font-size:15.6px;line-height:20px;">$</span>
<span style="left:1426.10px;top:351.69px;font-size:15.6px;line-height:20px;letter-spacing:0.094px;">40.00</span>
<span style="left:1376.20px;top:373.89px;font-size:15.6px;line-height:20px;">$</span>
<span style="left:1426.10px;top:373.89px;font-size:15.6px;line-height:20px;letter-spacing:0.094px;">50.00</span>
<span style="left:1376.20px;top:396.19px;font-size:15.6px;line-height:20px;">$</span>
<span style="left:1417.10px;top:396.19px;font-size:15.6px;line-height:20px;letter-spacing:0.141px;">190.00</span>
<span style="left:1051.90px;top:418.69px;font-size:15.6px;line-height:20px;letter-spacing:-0.437px;transform:scaleX(0.9652);">Trash</span>
<span style="left:1376.20px;top:418.69px;font-size:15.6px;line-height:20px;">$</span>
<span style="left:1426.10px;top:418.69px;font-size:15.6px;line-height:20px;letter-spacing:0.094px;">55.00</span>
<span style="left:1051.90px;top:441.19px;font-size:15.6px;line-height:20px;letter-spacing:-0.039px;">Gas/Electricity</span>
<span style="left:1376.20px;top:441.19px;font-size:15.6px;line-height:20px;">$</span>
<span style="left:1417.10px;top:441.19px;font-size:15.6px;line-height:20px;letter-spacing:0.141px;">120.00</span>
<span style="left:1051.90px;top:463.69px;font-size:15.6px;line-height:20px;letter-spacing:0.126px;">Water/Sewer</span>
<span style="left:1376.20px;top:463.69px;font-size:15.6px;line-height:20px;">$</span>
<span style="left:1426.10px;top:463.69px;font-size:15.6px;line-height:20px;letter-spacing:0.094px;">90.00</span>
<span style="left:1051.90px;top:486.69px;font-size:15.6px;line-height:20px;letter-spacing:0.261px;">Phone/Internet</span>
<span style="left:1376.20px;top:486.69px;font-size:15.6px;line-height:20px;">$</span>
<span style="left:1426.10px;top:486.69px;font-size:15.6px;line-height:20px;letter-spacing:0.094px;">75.00</span>
<span style="left:1051.90px;top:510.19px;font-size:15.6px;line-height:20px;letter-spacing:-0.437px;transform:scaleX(0.9539);">MISC.</span>
<span style="left:1376.20px;top:510.19px;font-size:15.6px;line-height:20px;">$</span>
<span style="left:1417.10px;top:510.19px;font-size:15.6px;line-height:20px;letter-spacing:0.141px;">100.00</span>
<span style="left:1399.90px;top:533.29px;font-size:15.6px;line-height:20px;letter-spacing:0.128px;">$3,458.02</span>
<span style="left:100.00px;top:869.84px;font-size:14.6px;line-height:19px;color:#217346;font-weight:bold;letter-spacing:0.228px;">Move Sell Sample</span>
<span style="left:252.60px;top:869.84px;font-size:14.6px;line-height:19px;color:#444;letter-spacing:0.138px;">Move Rental Sample</span>
<span style="left:419.00px;top:869.84px;font-size:14.6px;line-height:19px;color:#444;letter-spacing:0.078px;">Move Sell</span>
<span style="left:510.40px;top:869.84px;font-size:14.6px;line-height:19px;color:#444;letter-spacing:0.217px;">Move Rental</span>
<span style="left:1239.00px;top:572.04px;font-size:19.5px;line-height:25px;color:#595959;font-weight:bold;letter-spacing:0.138px;">Monthly Cost</span>
<span style="left:1053.63px;top:602.12px;font-size:11.2px;line-height:15px;color:#595959;font-weight:bold;">$4,000.00</span>
<span style="left:1053.63px;top:624.62px;font-size:11.2px;line-height:15px;color:#595959;font-weight:bold;">$3,500.00</span>
<span style="left:1053.63px;top:647.12px;font-size:11.2px;line-height:15px;color:#595959;font-weight:bold;">$3,000.00</span>
<span style="left:1053.63px;top:669.62px;font-size:11.2px;line-height:15px;color:#595959;font-weight:bold;">$2,500.00</span>
<span style="left:1053.63px;top:692.12px;font-size:11.2px;line-height:15px;color:#595959;font-weight:bold;">$2,000.00</span>
<span style="left:1053.63px;top:714.62px;font-size:11.2px;line-height:15px;color:#595959;font-weight:bold;">$1,500.00</span>
<span style="left:1053.63px;top:737.12px;font-size:11.2px;line-height:15px;color:#595959;font-weight:bold;">$1,000.00</span>
<span style="left:1062.96px;top:759.62px;font-size:11.2px;line-height:15px;color:#595959;font-weight:bold;">$500.00</span>
<span style="left:1075.40px;top:782.12px;font-size:11.2px;line-height:15px;color:#595959;font-weight:bold;">$0.00</span>
<span style="left:1221.41px;top:685.62px;font-size:11.2px;line-height:15px;color:#404040;font-weight:bold;">$1,895.00</span>
<span style="left:1385.61px;top:615.32px;font-size:11.2px;line-height:15px;color:#404040;font-weight:bold;">$3,458.02</span>
<span style="left:1224.00px;top:805.82px;font-size:11.2px;line-height:15px;color:#595959;letter-spacing:-0.092px;">Current Monthly</span>
<span style="left:1369.30px;top:805.82px;font-size:11.2px;line-height:15px;color:#595959;letter-spacing:-0.046px;">New Monthly</span>
<span style="left:17.50px;top:32.26px;font-size:12.8px;line-height:17px;color:#5c5c5c;letter-spacing:0.744px;">ABC</span>
<span style="left:140.20px;top:49.41px;font-size:14.4px;line-height:19px;color:#3d76b8;font-weight:bold;letter-spacing:0.695px;">123</span>
<span style="left:403.00px;top:32.63px;font-size:20.4px;line-height:27px;color:#1d7a1d;font-weight:500;transform:scaleX(0.9220);">あ</span>
<span style="left:389.20px;top:42.02px;font-size:26.5px;line-height:34px;color:#1e7fd8;transform:scaleX(0.8617);">a</span>
<span style="left:241.50px;top:143.34px;font-size:17.5px;line-height:23px;color:#6e6e6e;font-style:italic;font-family:'Liberation Serif',serif;letter-spacing:1.050px;transform:scaleX(1.0600);">fx</span>
<span style="left:376.30px;top:226.74px;font-size:19.8px;line-height:26px;font-weight:bold;letter-spacing:-0.498px;">Sell,</span>
<span style="left:420.06px;top:226.74px;font-size:19.8px;line-height:26px;font-weight:bold;letter-spacing:0.753px;">Move,</span>
<span style="left:484.20px;top:226.74px;font-size:19.8px;line-height:26px;font-weight:bold;letter-spacing:-0.554px;transform:scaleX(0.9903);">Purchase</span>
<span style="left:573.63px;top:226.74px;font-size:19.8px;line-height:26px;font-weight:bold;letter-spacing:-0.554px;transform:scaleX(0.9782);">(SAMPLE,</span>
<span style="left:667.36px;top:226.74px;font-size:19.8px;line-height:26px;font-weight:bold;letter-spacing:-0.554px;transform:scaleX(0.8841);">CLICK</span>
<span style="left:723.90px;top:226.74px;font-size:19.8px;line-height:26px;font-weight:bold;letter-spacing:0.269px;">ON</span>
<span style="left:758.91px;top:226.74px;font-size:19.8px;line-height:26px;font-weight:bold;letter-spacing:-0.554px;transform:scaleX(0.9624);">NEXT</span>
<span style="left:813.15px;top:226.74px;font-size:19.8px;line-height:26px;font-weight:bold;letter-spacing:-0.554px;transform:scaleX(0.9324);">TAB</span>
<span style="left:853.73px;top:226.74px;font-size:19.8px;line-height:26px;font-weight:bold;letter-spacing:-0.554px;transform:scaleX(0.9330);">FOR</span>
<span style="left:896.72px;top:226.74px;font-size:19.8px;line-height:26px;font-weight:bold;letter-spacing:-0.554px;transform:scaleX(0.9516);">BLANK,</span>
<span style="left:970.26px;top:226.74px;font-size:19.8px;line-height:26px;font-weight:bold;letter-spacing:-0.554px;transform:scaleX(0.9261);">READY</span>
<span style="left:1037.40px;top:226.74px;font-size:19.8px;line-height:26px;font-weight:bold;letter-spacing:-0.554px;transform:scaleX(0.9666);">TO</span>
<span style="left:1068.14px;top:226.74px;font-size:19.8px;line-height:26px;font-weight:bold;letter-spacing:-0.554px;transform:scaleX(0.9716);">EDIT</span>
<span style="left:1115.38px;top:226.74px;font-size:19.8px;line-height:26px;font-weight:bold;letter-spacing:-0.554px;transform:scaleX(0.9277);">SHEET)</span>
<span style="left:84.40px;top:265.20px;font-size:12.4px;line-height:16px;letter-spacing:0.033px;">Enter</span>
<span style="left:117.24px;top:265.20px;font-size:12.4px;line-height:16px;letter-spacing:0.681px;">in</span>
<span style="left:130.66px;top:265.20px;font-size:12.4px;line-height:16px;letter-spacing:-0.015px;">variables</span>
<span style="left:183.22px;top:265.20px;font-size:12.4px;line-height:16px;letter-spacing:0.681px;">in</span>
<span style="left:196.63px;top:265.20px;font-size:12.4px;line-height:16px;letter-spacing:0.021px;">green,</span>
<span style="left:234.96px;top:265.20px;font-size:12.4px;line-height:16px;letter-spacing:0.617px;">do</span>
<span style="left:252.45px;top:265.20px;font-size:12.4px;line-height:16px;letter-spacing:0.744px;transform:scaleX(1.0143);">not</span>
<span style="left:274.53px;top:265.20px;font-size:12.4px;line-height:16px;letter-spacing:0.084px;">ever</span>
<span style="left:301.98px;top:265.20px;font-size:12.4px;line-height:16px;letter-spacing:-0.015px;">variables</span>
<span style="left:354.54px;top:265.20px;font-size:12.4px;line-height:16px;letter-spacing:0.681px;">in</span>
<span style="left:367.96px;top:265.20px;font-size:12.4px;line-height:16px;letter-spacing:0.323px;">yellow</span>
<span style="left:85.10px;top:284.29px;font-size:15.6px;line-height:20px;font-weight:bold;letter-spacing:-0.437px;transform:scaleX(0.9869);">Current</span>
<span style="left:141.90px;top:284.29px;font-size:15.6px;line-height:20px;font-weight:bold;letter-spacing:-0.421px;">Property</span>
<span style="left:85.10px;top:306.89px;font-size:15.6px;line-height:20px;letter-spacing:0.316px;">Amount</span>
<span style="left:144.23px;top:306.89px;font-size:15.6px;line-height:20px;letter-spacing:-0.141px;">Owed</span>
<span style="left:188.36px;top:306.89px;font-size:15.6px;line-height:20px;letter-spacing:0.403px;">on</span>
<span style="left:209.92px;top:306.89px;font-size:15.6px;line-height:20px;letter-spacing:0.096px;">Property</span>
<span style="left:85.10px;top:329.19px;font-size:15.6px;line-height:20px;letter-spacing:-0.437px;transform:scaleX(0.9821);">Sold</span>
<span style="left:118.28px;top:329.19px;font-size:15.6px;line-height:20px;letter-spacing:-0.388px;">Price</span>
<span style="left:85.10px;top:351.69px;font-size:15.6px;line-height:20px;letter-spacing:-0.437px;transform:scaleX(0.9618);">Gross</span>
<span style="left:127.23px;top:351.69px;font-size:15.6px;line-height:20px;letter-spacing:0.276px;">Profit</span>
<span style="left:85.10px;top:373.89px;font-size:15.6px;line-height:20px;letter-spacing:-0.138px;">Realtor</span>
<span style="left:138.35px;top:373.89px;font-size:15.6px;line-height:20px;letter-spacing:-0.437px;transform:scaleX(0.9338);">Fee</span>
<span style="left:166.44px;top:373.89px;font-size:15.6px;line-height:20px;letter-spacing:-0.247px;">Percent</span>
<span style="left:85.10px;top:396.19px;font-size:15.6px;line-height:20px;letter-spacing:-0.138px;">Realtor</span>
<span style="left:138.35px;top:396.19px;font-size:15.6px;line-height:20px;letter-spacing:-0.437px;transform:scaleX(0.9255);">Fees</span>
<span style="left:173.04px;top:396.19px;font-size:15.6px;line-height:20px;letter-spacing:0.316px;">Amount</span>
<span style="left:85.10px;top:418.69px;font-size:15.6px;line-height:20px;letter-spacing:0.096px;">Property</span>
<span style="left:148.52px;top:418.69px;font-size:15.6px;line-height:20px;letter-spacing:-0.437px;transform:scaleX(0.9402);">Taxes</span>
<span style="left:188.99px;top:418.69px;font-size:15.6px;line-height:20px;letter-spacing:-0.141px;">Owed</span>
<span style="left:85.10px;top:486.69px;font-size:15.6px;line-height:20px;letter-spacing:0.014px;">Total</span>
<span style="left:121.90px;top:486.69px;font-size:15.6px;line-height:20px;letter-spacing:0.281px;">Net</span>
<span style="left:150.54px;top:486.69px;font-size:15.6px;line-height:20px;letter-spacing:0.276px;">Profit</span>
<span style="left:85.10px;top:533.29px;font-size:15.6px;line-height:20px;font-weight:bold;letter-spacing:-0.437px;transform:scaleX(0.9869);">Current</span>
<span style="left:141.90px;top:533.29px;font-size:15.6px;line-height:20px;font-weight:bold;letter-spacing:-0.421px;">Property</span>
<span style="left:206.89px;top:533.29px;font-size:15.6px;line-height:20px;font-weight:bold;letter-spacing:-0.256px;">Maintenance:</span>
<span style="left:85.10px;top:556.99px;font-size:15.6px;line-height:20px;letter-spacing:-0.006px;">Currenty</span>
<span style="left:148.66px;top:556.99px;font-size:15.6px;line-height:20px;letter-spacing:0.568px;">Monthly</span>
<span style="left:210.48px;top:556.99px;font-size:15.6px;line-height:20px;letter-spacing:0.119px;">Mortgage</span>
<span style="left:281.01px;top:556.99px;font-size:15.6px;line-height:20px;letter-spacing:-0.210px;">(P&amp;I)</span>
<span style="left:85.10px;top:579.99px;font-size:15.6px;line-height:20px;letter-spacing:0.568px;">Monthly</span>
<span style="left:146.92px;top:579.99px;font-size:15.6px;line-height:20px;letter-spacing:-0.243px;">Insurance</span>
<span style="left:85.10px;top:602.89px;font-size:15.6px;line-height:20px;letter-spacing:0.568px;">Monthly</span>
<span style="left:146.92px;top:602.89px;font-size:15.6px;line-height:20px;letter-spacing:-0.437px;transform:scaleX(0.9488);">HOA</span>
<span style="left:85.10px;top:625.69px;font-size:15.6px;line-height:20px;letter-spacing:0.568px;">Monthly</span>
<span style="left:146.92px;top:625.69px;font-size:15.6px;line-height:20px;letter-spacing:0.093px;">Maintenance</span>
<span style="left:240.96px;top:625.69px;font-size:15.6px;line-height:20px;letter-spacing:-0.406px;">(Landscaping</span>
<span style="left:333.94px;top:625.69px;font-size:15.6px;line-height:20px;">etc)</span>
<span style="left:85.10px;top:648.19px;font-size:15.6px;line-height:20px;letter-spacing:0.096px;">Property</span>
<span style="left:148.52px;top:648.19px;font-size:15.6px;line-height:20px;letter-spacing:-0.437px;transform:scaleX(0.9402);">Taxes</span>
<span style="left:85.10px;top:782.99px;font-size:15.6px;line-height:20px;letter-spacing:0.020px;">Current</span>
<span style="left:141.03px;top:782.99px;font-size:15.6px;line-height:20px;letter-spacing:0.568px;">Monthly</span>
<span style="left:560.40px;top:284.29px;font-size:15.6px;line-height:20px;font-weight:bold;">New</span>
<span style="left:596.28px;top:284.29px;font-size:15.6px;line-height:20px;font-weight:bold;letter-spacing:-0.421px;">Property</span>
<span style="left:661.28px;top:284.29px;font-size:15.6px;line-height:20px;font-weight:bold;letter-spacing:-0.437px;transform:scaleX(0.9443);">Purchase</span>
<span style="left:728.50px;top:284.29px;font-size:15.6px;line-height:20px;font-weight:bold;letter-spacing:-0.259px;">Information:</span>
<span style="left:560.40px;top:306.89px;font-size:15.6px;line-height:20px;letter-spacing:-0.437px;transform:scaleX(0.9908);">Purchase</span>
<span style="left:626.45px;top:306.89px;font-size:15.6px;line-height:20px;letter-spacing:-0.388px;">Price</span>
<span style="left:664.24px;top:306.89px;font-size:15.6px;line-height:20px;letter-spacing:0.936px;transform:scaleX(1.0068);">of</span>
<span style="left:682.09px;top:306.89px;font-size:15.6px;line-height:20px;letter-spacing:0.096px;">Property</span>
<span style="left:560.40px;top:329.19px;font-size:15.6px;line-height:20px;letter-spacing:0.089px;">Downpayment</span>
<span style="left:664.77px;top:329.19px;font-size:15.6px;line-height:20px;letter-spacing:-0.247px;">Percent</span>
<span style="left:560.40px;top:373.89px;font-size:15.6px;line-height:20px;letter-spacing:0.128px;">Interest</span>
<span style="left:617.11px;top:373.89px;font-size:15.6px;line-height:20px;letter-spacing:-0.437px;transform:scaleX(0.9779);">Rate</span>
<span style="left:651.85px;top:373.89px;font-size:15.6px;line-height:20px;transform:scaleX(0.8692);">%</span>
<span style="left:560.40px;top:396.19px;font-size:15.6px;line-height:20px;letter-spacing:-0.437px;transform:scaleX(0.9860);">Loan</span>
<span style="left:597.12px;top:396.19px;font-size:15.6px;line-height:20px;letter-spacing:-0.067px;">Term</span>
<span style="left:635.39px;top:396.19px;font-size:15.6px;line-height:20px;letter-spacing:-0.437px;transform:scaleX(0.9747);">(Years)</span>
<span style="left:560.40px;top:418.69px;font-size:15.6px;line-height:20px;letter-spacing:0.023px;">New</span>
<span style="left:595.45px;top:418.69px;font-size:15.6px;line-height:20px;letter-spacing:0.316px;">Amount</span>
<span style="left:654.58px;top:418.69px;font-size:15.6px;line-height:20px;letter-spacing:0.128px;">Mortgaged</span>
<span style="left:560.40px;top:441.19px;font-size:15.6px;line-height:20px;letter-spacing:-0.437px;transform:scaleX(0.9923);">Closing</span>
<span style="left:613.22px;top:441.19px;font-size:15.6px;line-height:20px;letter-spacing:-0.437px;transform:scaleX(0.9584);">Costs</span>
<span style="left:653.55px;top:441.19px;font-size:15.6px;line-height:20px;letter-spacing:-0.247px;">Percent</span>
<span style="left:560.40px;top:463.69px;font-size:15.6px;line-height:20px;letter-spacing:-0.437px;transform:scaleX(0.9923);">Closing</span>
<span style="left:613.22px;top:463.69px;font-size:15.6px;line-height:20px;letter-spacing:-0.437px;transform:scaleX(0.9584);">Costs</span>
<span style="left:653.55px;top:463.69px;font-size:15.6px;line-height:20px;letter-spacing:0.316px;">Amount</span>
<span style="left:560.40px;top:510.19px;font-size:15.6px;line-height:20px;letter-spacing:0.014px;">Total</span>
<span style="left:597.20px;top:510.19px;font-size:15.6px;line-height:20px;letter-spacing:-0.227px;">Capital</span>
<span style="left:648.19px;top:510.19px;font-size:15.6px;line-height:20px;letter-spacing:-0.172px;">Needed</span>
<span style="left:560.40px;top:556.99px;font-size:15.6px;line-height:20px;letter-spacing:0.023px;">New</span>
<span style="left:595.45px;top:556.99px;font-size:15.6px;line-height:20px;letter-spacing:-0.086px;">Principal</span>
<span style="left:658.38px;top:556.99px;font-size:15.6px;line-height:20px;letter-spacing:-0.113px;">and</span>
<span style="left:687.98px;top:556.99px;font-size:15.6px;line-height:20px;letter-spacing:0.128px;">Interest</span>
<span style="left:744.69px;top:556.99px;font-size:15.6px;line-height:20px;letter-spacing:0.094px;">(Mortgage</span>
<span style="left:820.33px;top:556.99px;font-size:15.6px;line-height:20px;letter-spacing:-0.437px;transform:scaleX(0.9906);">PMT)</span>
<span style="left:560.40px;top:602.89px;font-size:15.6px;line-height:20px;letter-spacing:-0.295px;">Remaining</span>
<span style="left:636.39px;top:602.89px;font-size:15.6px;line-height:20px;letter-spacing:0.276px;">Profit</span>
<span style="left:677.98px;top:602.89px;font-size:15.6px;line-height:20px;letter-spacing:0.322px;">After</span>
<span style="left:716.01px;top:602.89px;font-size:15.6px;line-height:20px;letter-spacing:-0.437px;transform:scaleX(0.9955);">Roll</span>
<span style="left:745.26px;top:602.89px;font-size:15.6px;line-height:20px;letter-spacing:-0.304px;">Over</span>
<span style="left:1051.90px;top:284.29px;font-size:15.6px;line-height:20px;font-weight:bold;">New</span>
<span style="left:1087.78px;top:284.29px;font-size:15.6px;line-height:20px;font-weight:bold;letter-spacing:-0.421px;">Property</span>
<span style="left:1152.78px;top:284.29px;font-size:15.6px;line-height:20px;font-weight:bold;letter-spacing:-0.256px;">Maintenance:</span>
<span style="left:1051.90px;top:306.89px;font-size:15.6px;line-height:20px;letter-spacing:0.023px;">New</span>
<span style="left:1086.95px;top:306.89px;font-size:15.6px;line-height:20px;letter-spacing:-0.086px;">Principal</span>
<span style="left:1149.88px;top:306.89px;font-size:15.6px;line-height:20px;letter-spacing:-0.113px;">and</span>
<span style="left:1179.48px;top:306.89px;font-size:15.6px;line-height:20px;letter-spacing:0.128px;">Interest</span>
<span style="left:1236.19px;top:306.89px;font-size:15.6px;line-height:20px;letter-spacing:0.094px;">(Mortgage</span>
<span style="left:1311.83px;top:306.89px;font-size:15.6px;line-height:20px;letter-spacing:-0.437px;transform:scaleX(0.9906);">PMT)</span>
<span style="left:1051.90px;top:329.19px;font-size:15.6px;line-height:20px;letter-spacing:0.568px;">Monthly</span>
<span style="left:1113.72px;top:329.19px;font-size:15.6px;line-height:20px;letter-spacing:-0.243px;">Insurance</span>
<span style="left:1051.90px;top:351.69px;font-size:15.6px;line-height:20px;letter-spacing:0.568px;">Monthly</span>
<span style="left:1113.72px;top:351.69px;font-size:15.6px;line-height:20px;letter-spacing:-0.437px;transform:scaleX(0.9488);">HOA</span>
<span style="left:1051.90px;top:373.89px;font-size:15.6px;line-height:20px;letter-spacing:0.568px;">Monthly</span>
<span style="left:1113.72px;top:373.89px;font-size:15.6px;line-height:20px;letter-spacing:0.093px;">Maintenance</span>
<span style="left:1207.76px;top:373.89px;font-size:15.6px;line-height:20px;letter-spacing:-0.406px;">(Landscaping</span>
<span style="left:1300.74px;top:373.89px;font-size:15.6px;line-height:20px;">etc)</span>
<span style="left:1051.90px;top:396.19px;font-size:15.6px;line-height:20px;letter-spacing:0.096px;">Property</span>
<span style="left:1115.32px;top:396.19px;font-size:15.6px;line-height:20px;letter-spacing:-0.437px;transform:scaleX(0.9402);">Taxes</span>
<span style="left:1051.90px;top:533.29px;font-size:15.6px;line-height:20px;letter-spacing:0.023px;">New</span>
<span style="left:1086.95px;top:533.29px;font-size:15.6px;line-height:20px;letter-spacing:0.568px;">Monthly</span>
</div>
</body></html>
